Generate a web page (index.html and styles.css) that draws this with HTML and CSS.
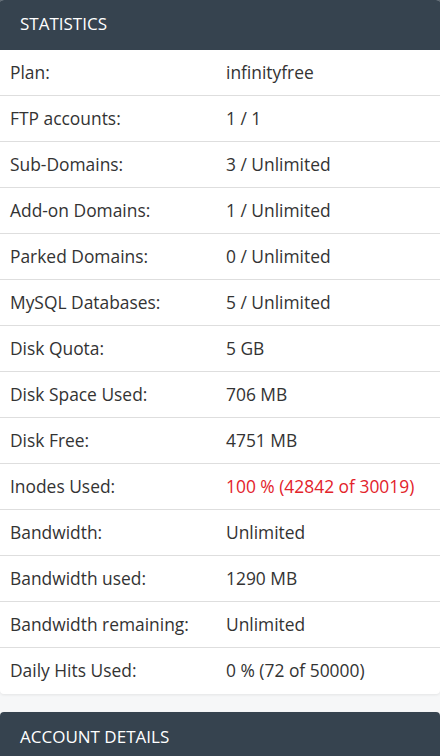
FILE: index.html
```html
<!DOCTYPE html>
<html>
<head>
    <link rel="stylesheet" href="styles.css">
</head>
<body>
    <div class="card">
        <div class="card-head">STATISTICS</div>
        <div class="stats">
            <div class="row"><span class="label">Plan:</span><span class="value">infinityfree</span></div>
            <div class="row"><span class="label">FTP accounts:</span><span class="value">1 / 1</span></div>
            <div class="row"><span class="label">Sub-Domains:</span><span class="value">3 / Unlimited</span></div>
            <div class="row"><span class="label">Add-on Domains:</span><span class="value">1 / Unlimited</span></div>
            <div class="row"><span class="label">Parked Domains:</span><span class="value">0 / Unlimited</span></div>
            <div class="row"><span class="label">MySQL Databases:</span><span class="value">5 / Unlimited</span></div>
            <div class="row"><span class="label">Disk Quota:</span><span class="value">5 GB</span></div>
            <div class="row"><span class="label">Disk Space Used:</span><span class="value">706 MB</span></div>
            <div class="row"><span class="label">Disk Free:</span><span class="value">4751 MB</span></div>
            <div class="row"><span class="label">Inodes Used:</span><span class="value warn">100 % (42842 of 30019)</span></div>
            <div class="row"><span class="label">Bandwidth:</span><span class="value">Unlimited</span></div>
            <div class="row"><span class="label">Bandwidth used:</span><span class="value">1290 MB</span></div>
            <div class="row"><span class="label">Bandwidth remaining:</span><span class="value">Unlimited</span></div>
            <div class="row"><span class="label">Daily Hits Used:</span><span class="value">0 % (72 of 50000)</span></div>
        </div>
    </div>

    <div class="card">
        <div class="card-head">ACCOUNT DETAILS</div>
    </div>
</body>
</html>
```

FILE: styles.css
```css
body {
    margin: 0;
    background-color: #f6f7f8;
    font-family: "Open Sans", "Liberation Sans", sans-serif;
    color: #333;
}

.card {
    background-color: white;
    border-radius: 4px;
    box-shadow: 0 1px 3px rgba(0, 0, 0, 0.08);
    margin-bottom: 18px;
    overflow: hidden;
}

.card:first-child {
    margin-top: -2px;
    border-top: 2px solid #2e3945;
}

.card-head {
    background-color: #36434f;
    color: white;
    font-size: 17px;
    height: 50px;
    line-height: 48px;
    padding: 0 20px;
    box-sizing: border-box;
}

.card:last-child .card-head {
    line-height: 50px;
}

.row {
    display: grid;
    grid-template-columns: 216px 1fr;
    height: 46px;
    box-sizing: border-box;
    padding-bottom: 2px;
    align-items: center;
    border-top: 1px solid #dedede;
    font-size: 17.4px;
}

.row:first-child {
    border-top: none;
    height: 45px;
}

.stats {
    padding-bottom: 1px;
}

.label {
    padding-left: 10px;
}

.value {
    padding-left: 10px;
}

.warn {
    color: #e3232b;
}
```
